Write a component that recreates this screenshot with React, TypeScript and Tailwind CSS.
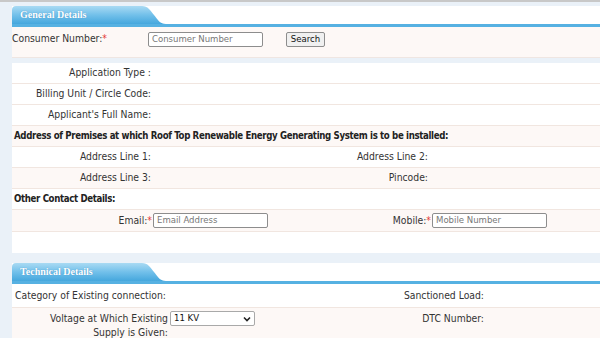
import React from 'react';

const font = { fontFamily: '"DejaVu Sans Condensed", "DejaVu Sans", Tahoma, sans-serif' };

function Tab({ title, id }: { title: string; id: string }) {
  return (
    <div className="flex h-[18px] bg-white">
      <div className="relative w-[154px] h-[18px] shrink-0">
        <svg width="154" height="18" viewBox="0 0 154 18" className="absolute inset-0">
          <defs>
            <linearGradient id={id} x1="0" y1="0" x2="0" y2="1">
              <stop offset="0" stopColor="#a9daf3" />
              <stop offset="0.5" stopColor="#72c0ea" />
              <stop offset="1" stopColor="#45a7dd" />
            </linearGradient>
          </defs>
          <path d="M0,18 L0,4 Q0,0 4,0 L130,0 C136,0 138,4 142,9 C146,14 148,18 154,18 Z" fill={`url(#${id})`} />
        </svg>
        <span
          className="absolute left-[8px] top-[3px] text-[10px] font-bold text-white leading-[12px]"
          style={{ fontFamily: '"Liberation Serif", "DejaVu Serif", serif', textShadow: '0 0 1px #3a8cc0' }}
        >
          {title}
        </span>
      </div>
      <div className="flex-1" />
    </div>
  );
}

function Star() {
  return <span className="text-[#e53935]">*</span>;
}

function Row({ pink, children, h = 'h-[21px]' }: { pink?: boolean; children: React.ReactNode; h?: string }) {
  return (
    <div className={`flex items-center ${h} border-b border-[#f1e6e0] ${pink ? 'bg-[#fdf8f6]' : 'bg-white'}`}>
      {children}
    </div>
  );
}

function Field({ placeholder, w = 'w-[115px]' }: { placeholder: string; w?: string }) {
  return (
    <div className={`${w} h-[15px] border border-[#8d8d8d] rounded-[2px] bg-white flex items-center px-[3px] text-[9.5px] text-[#777]`}>
      {placeholder}
    </div>
  );
}

export default function App() {
  return (
    <div className="w-[600px] h-[338px] overflow-hidden bg-[#eaf1f8] border-t-2 border-[#c8c8c8] text-[#333] text-[10.3px]" style={font}>
      <div className="pl-3 pt-[4px]">
        <div className="w-[600px]">
          <Tab title="General Details" id="tab-general" />
          <div className="h-[3px] bg-[#56b1e2]" />
          <div className="h-[31px] bg-[#fdf8f6] border-b border-[#efe6e2] flex items-start pt-[5px]">
            <span className="leading-[12px]">
              Consumer Number:<Star />
            </span>
            <div className="ml-[41px]">
              <Field placeholder="Consumer Number" />
            </div>
            <div className="ml-[23px] w-[39px] h-[15px] border border-[#8d8d8d] rounded-[2px] bg-[#f0f0f0] flex items-center justify-center text-[9.5px] text-[#111]">
              Search
            </div>
          </div>
        </div>

        <div className="w-[600px] mt-[5px] bg-white">
          <Row>
            <span className="w-[140px] text-right pr-[1px]">Application Type :</span>
          </Row>
          <Row>
            <span className="w-[140px] text-right pr-[1px]">Billing Unit / Circle Code:</span>
          </Row>
          <Row>
            <span className="w-[140px] text-right pr-[1px]">Applicant's Full Name:</span>
          </Row>
          <Row pink>
            <span className="pl-[2px] font-bold text-[#222] text-[9.6px] tracking-[-0.35px]">
              Address of Premises at which Roof Top Renewable Energy Generating System is to be installed:
            </span>
          </Row>
          <Row>
            <span className="w-[140px] text-right pr-[1px]">Address Line 1:</span>
            <span className="w-[277px] text-right pr-[1px]">Address Line 2:</span>
          </Row>
          <Row pink>
            <span className="w-[140px] text-right pr-[1px]">Address Line 3:</span>
            <span className="w-[277px] text-right pr-[1px]">Pincode:</span>
          </Row>
          <Row>
            <span className="pl-[2px] font-bold text-[#222] text-[9.6px] tracking-[-0.35px]">Other Contact Details:</span>
          </Row>
          <Row pink h="h-[22px]">
            <span className="w-[140px] text-right">
              Email:<Star />
            </span>
            <div className="ml-[1px]">
              <Field placeholder="Email Address" />
            </div>
            <span className="w-[163px] text-right">
              Mobile:<Star />
            </span>
            <div className="ml-[1px]">
              <Field placeholder="Mobile Number" />
            </div>
          </Row>
          <div className="h-[21px] bg-white" />
        </div>

        <div className="w-[600px] mt-[10px]">
          <Tab title="Technical Details" id="tab-technical" />
          <div className="h-[3px] bg-[#56b1e2]" />
          <div className="flex items-center h-[24px] bg-white border-b border-[#f1e6e0]">
            <span className="w-[156px] pl-[3px] whitespace-nowrap">Category of Existing connection:</span>
            <span className="w-[316px] text-right">Sanctioned Load:</span>
          </div>
          <div className="flex items-start h-[40px] bg-[#fdf8f6] pt-[3px]">
            <span className="w-[156px] text-right leading-[14px]">
              Voltage at Which Existing
              <br />
              Supply is Given:
            </span>
            <div className="ml-[2px] w-[85px] h-[15px] border border-[#a9a9a9] rounded-[2px] bg-white flex items-center justify-between px-[3px] text-[9.5px] text-[#111]">
              <span>11 KV</span>
              <svg width="8" height="6" viewBox="0 0 8 6">
                <path d="M1,1.5 L4,4.5 L7,1.5" fill="none" stroke="#222" strokeWidth="1.6" />
              </svg>
            </div>
            <span className="w-[229px] text-right leading-[14px]">DTC Number:</span>
          </div>
        </div>
      </div>
    </div>
  );
}
